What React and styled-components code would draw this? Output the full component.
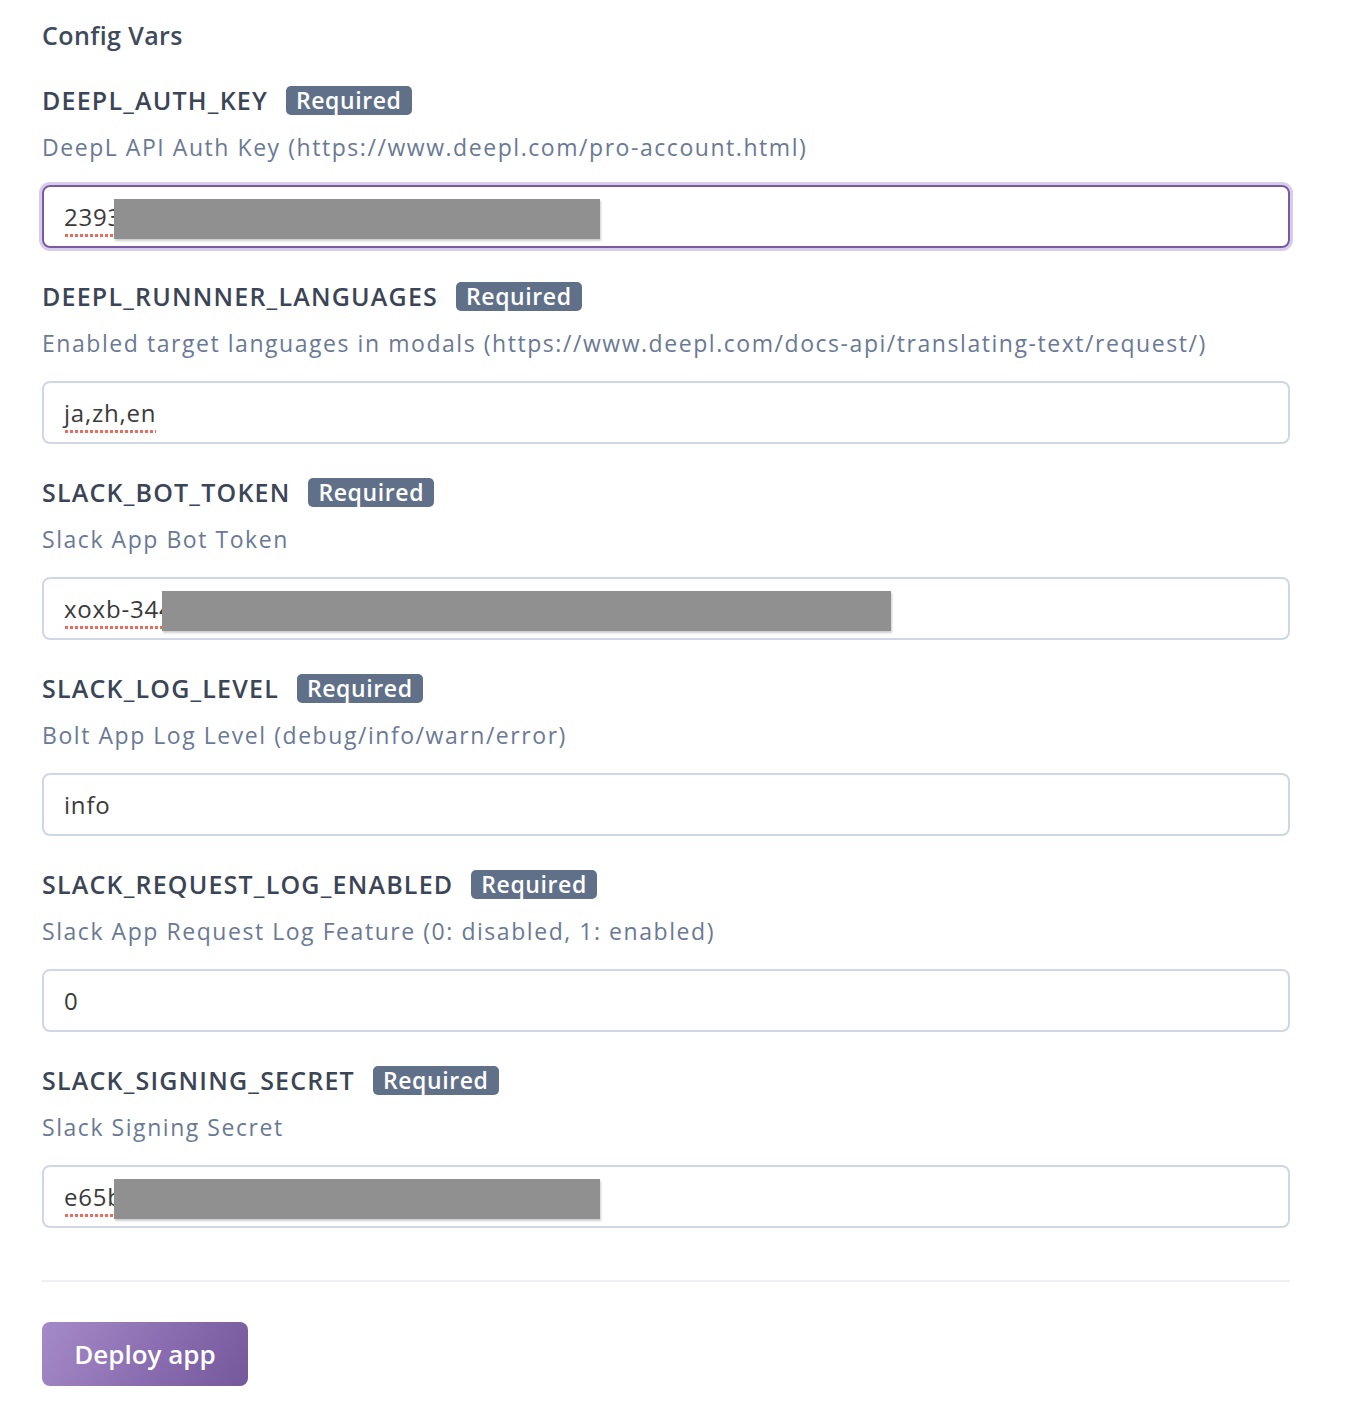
import React from "react";
import styled, { createGlobalStyle } from "styled-components";

const GlobalStyle = createGlobalStyle`
    body {
        margin: 0;
        background: #fff;
        font-family: "Open Sans", Lato, sans-serif;
    }
`;

const Page = styled.section`
    width: 1248px;
    margin-left: 42px;
    padding-top: 20px;
    padding-bottom: 16px;
`;

const Title = styled.h2`
    margin: 0 0 34px;
    font-size: 25px;
    line-height: 30px;
    font-weight: 600;
    letter-spacing: 0.4px;
    color: #3f4a5a;
`;

const Field = styled.div`
    margin-bottom: 32px;
`;

const LabelRow = styled.div`
    display: flex;
    align-items: center;
    gap: 18px;
    height: 32px;
`;

const Label = styled.span`
    font-size: 25px;
    font-weight: 600;
    letter-spacing: 1.2px;
    color: #3b4556;
`;

const Badge = styled.span`
    display: inline-flex;
    align-items: center;
    height: 29px;
    padding: 0 10px;
    border-radius: 5px;
    background: #617089;
    color: #fff;
    font-size: 23px;
    font-weight: 600;
    letter-spacing: 0.6px;
`;

const Description = styled.p`
    margin: 15px 0 22px;
    font-size: 23px;
    line-height: 32px;
    letter-spacing: 1.55px;
    color: #6a7995;
`;

const InputBox = styled.div`
    position: relative;
    box-sizing: border-box;
    height: 63px;
    display: flex;
    align-items: center;
    padding: 0 20px;
    border: 2px solid ${({ focused }) => (focused ? "#79599f" : "#cfd7e6")};
    border-radius: 8px;
    box-shadow: ${({ focused }) => (focused ? "0 0 0 3px #d8cceb" : "none")};
    font-size: 24px;
    letter-spacing: 0.8px;
    color: #3a3a3a;
`;

const Misspelled = styled.span`
    padding-bottom: 5px;
    margin-bottom: -5px;
    background-image: radial-gradient(circle, #ef6a5c 1.6px, transparent 2px);
    background-size: 5px 5px;
    background-repeat: repeat-x;
    background-position: 0 100%;
`;

const Redacted = styled.div`
    position: absolute;
    top: 12px;
    height: 40px;
    background: #909090;
    box-shadow: 1px 2px 2px rgba(0, 0, 0, 0.2);
`;

const Divider = styled.hr`
    margin: 52px 0 40px;
    border: none;
    border-top: 2px solid #eeeff3;
`;

const DeployButton = styled.button`
    width: 206px;
    height: 64px;
    border: none;
    border-radius: 8px;
    background: linear-gradient(120deg, #a58ac8 0%, #8a6db0 55%, #75589b 100%);
    color: #fff;
    font-family: inherit;
    font-size: 26px;
    font-weight: 600;
    cursor: pointer;
`;

const vars = [
    {
        name: "DEEPL_AUTH_KEY",
        desc: "DeepL API Auth Key (https://www.deepl.com/pro-account.html)",
        value: "2393",
        misspelled: true,
        focused: true,
        redact: { left: 70, width: 486 },
    },
    {
        name: "DEEPL_RUNNNER_LANGUAGES",
        desc: "Enabled target languages in modals (https://www.deepl.com/docs-api/translating-text/request/)",
        value: "ja,zh,en",
        misspelled: true,
    },
    {
        name: "SLACK_BOT_TOKEN",
        desc: "Slack App Bot Token",
        value: "xoxb-344",
        misspelled: true,
        redact: { left: 118, width: 729 },
    },
    {
        name: "SLACK_LOG_LEVEL",
        desc: "Bolt App Log Level (debug/info/warn/error)",
        value: "info",
    },
    {
        name: "SLACK_REQUEST_LOG_ENABLED",
        desc: "Slack App Request Log Feature (0: disabled, 1: enabled)",
        value: "0",
    },
    {
        name: "SLACK_SIGNING_SECRET",
        desc: "Slack Signing Secret",
        value: "e65b",
        misspelled: true,
        redact: { left: 70, width: 486 },
    },
];

const App = () => {
    return (
        <Page>
            <GlobalStyle />
            <Title>Config Vars</Title>
            {vars.map((v, i) => (
                <Field key={v.name} style={i === vars.length - 1 ? { marginBottom: 0 } : null}>
                    <LabelRow>
                        <Label>{v.name}</Label>
                        <Badge>Required</Badge>
                    </LabelRow>
                    <Description>{v.desc}</Description>
                    <InputBox focused={v.focused}>
                        {v.misspelled ? <Misspelled>{v.value}</Misspelled> : v.value}
                        {v.redact && (
                            <Redacted
                                style={{ left: v.redact.left, width: v.redact.width }}
                            />
                        )}
                    </InputBox>
                </Field>
            ))}
            <Divider />
            <DeployButton>Deploy app</DeployButton>
        </Page>
    );
};

export default App;
